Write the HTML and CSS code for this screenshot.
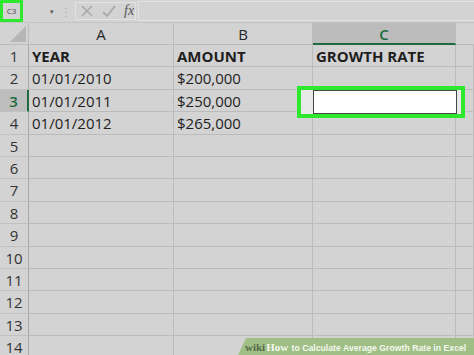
FILE: index.html
```html
<!DOCTYPE html>
<html lang="en">
<head>
    <meta charset="UTF-8">
    <title>Growth Rate</title>
    <link rel="stylesheet" href="styles.css">
</head>
<body>
    <div class="screen">
        <div class="formulaBar">
            <div class="nameBox">
                <span class="cellRef">C3</span>
                <span class="drop">&#9662;</span>
            </div>
            <span class="grip">&#8942;</span>
            <div class="fxBox">
                <svg class="ico" width="14" height="14" viewBox="0 0 14 14"><path d="M2 2 L12 12 M12 2 L2 12" stroke="#a9a9a9" stroke-width="1.6" fill="none"/></svg>
                <svg class="ico" width="16" height="14" viewBox="0 0 16 14"><path d="M2 8 L6 12 L14 2" stroke="#a9a9a9" stroke-width="1.8" fill="none"/></svg>
                <span class="fx">fx</span>
            </div>
            <div class="input"></div>
        </div>

        <div class="sheet">
            <div class="corner"><span class="tri"></span></div>
            <div class="colHead">A</div>
            <div class="colHead">B</div>
            <div class="colHead active">C</div>
            <div class="colHead last"></div>

            <div class="rowHead">1</div>
            <div class="cell bold">YEAR</div>
            <div class="cell bold">AMOUNT</div>
            <div class="cell bold">GROWTH RATE</div>
            <div class="cell"></div>

            <div class="rowHead">2</div>
            <div class="cell">01/01/2010</div>
            <div class="cell">$200,000</div>
            <div class="cell"></div>
            <div class="cell"></div>

            <div class="rowHead active">3</div>
            <div class="cell">01/01/2011</div>
            <div class="cell">$250,000</div>
            <div class="cell"></div>
            <div class="cell"></div>

            <div class="rowHead">4</div>
            <div class="cell">01/01/2012</div>
            <div class="cell">$265,000</div>
            <div class="cell"></div>
            <div class="cell"></div>

            <div class="rowHead">5</div><div class="cell"></div><div class="cell"></div><div class="cell"></div><div class="cell"></div>
            <div class="rowHead">6</div><div class="cell"></div><div class="cell"></div><div class="cell"></div><div class="cell"></div>
            <div class="rowHead">7</div><div class="cell"></div><div class="cell"></div><div class="cell"></div><div class="cell"></div>
            <div class="rowHead">8</div><div class="cell"></div><div class="cell"></div><div class="cell"></div><div class="cell"></div>
            <div class="rowHead">9</div><div class="cell"></div><div class="cell"></div><div class="cell"></div><div class="cell"></div>
            <div class="rowHead">10</div><div class="cell"></div><div class="cell"></div><div class="cell"></div><div class="cell"></div>
            <div class="rowHead">11</div><div class="cell"></div><div class="cell"></div><div class="cell"></div><div class="cell"></div>
            <div class="rowHead">12</div><div class="cell"></div><div class="cell"></div><div class="cell"></div><div class="cell"></div>
            <div class="rowHead">13</div><div class="cell"></div><div class="cell"></div><div class="cell"></div><div class="cell"></div>
            <div class="rowHead">14</div><div class="cell"></div><div class="cell"></div><div class="cell"></div><div class="cell"></div>
        </div>

        <!-- highlight drawn over the selected cell -->
        <div class="highlight"><div class="selected"></div></div>

        <div class="banner"><span class="wiki">wiki</span><span class="how">How</span> to Calculate Average Growth Rate in Excel</div>
    </div>
</body>
</html>
```

FILE: styles.css
```css
body {
    margin: 0;
    background: #d3d3d3;
}
.screen {
    position: relative;
    width: 474px;
    height: 355px;
    overflow: hidden;
    background: #d3d3d3;
    font-family: "Open Sans", "DejaVu Sans", sans-serif;
    color: #1e1e1e;
}

/* formula bar */
.formulaBar {
    display: flex;
    align-items: center;
    height: 22px;
    border-bottom: 1px solid #c4c4c4;
}
.nameBox {
    display: flex;
    align-items: center;
    width: 57px;
    height: 22px;
}
.cellRef {
    box-sizing: border-box;
    width: 23px;
    height: 22px;
    border: 3px solid #2ee82e;
    font-size: 8px;
    line-height: 16px;
    text-align: center;
    color: #444;
}
.drop {
    margin-left: 27px;
    font-size: 7px;
    color: #555;
}
.grip {
    width: 18px;
    text-align: center;
    font-size: 11px;
    color: #aaa;
}
.fxBox {
    box-sizing: border-box;
    display: flex;
    align-items: center;
    gap: 7px;
    width: 61px;
    height: 18px;
    padding-left: 4px;
    border: 1px solid #e2e2e2;
}
.fx {
    font-family: "Liberation Serif", serif;
    font-style: italic;
    font-size: 14px;
    color: #555;
}
.input {
    flex: 1;
    height: 18px;
    margin-left: 2px;
    border: 1px solid #e2e2e2;
    border-right: none;
}

/* grid */
.sheet {
    display: grid;
    grid-template-columns: 29px 145px 139px 143px 1fr;
    grid-template-rows: 22px repeat(14, 22.4px);
}
.corner {
    position: relative;
    border-right: 1px solid #bcbcbc;
    border-bottom: 1px solid #bcbcbc;
}
.tri {
    position: absolute;
    right: 2px;
    bottom: 2px;
    width: 0;
    height: 0;
    border-left: 16px solid transparent;
    border-bottom: 16px solid #b6b6b6;
}
.colHead {
    font-size: 15px;
    line-height: 22px;
    text-align: center;
    color: #262626;
    border-right: 1px solid #bcbcbc;
    border-bottom: 1px solid #bcbcbc;
}
.colHead.active {
    background: #bcbcbc;
    color: #1e6b3e;
    font-weight: 600;
    border-bottom: 2px solid #1e6b3e;
}
.colHead.last {
    border-right: none;
}
.rowHead {
    font-size: 15px;
    line-height: 22px;
    text-align: center;
    color: #333;
    border-right: 1px solid #a8a8a8;
    border-bottom: 1px solid #c0c0c0;
}
.rowHead.active {
    background: #bdbdbd;
    color: #1e6b3e;
    font-weight: 600;
    border-right: 2px solid #1e6b3e;
}
.cell {
    padding-left: 3px;
    font-size: 15px;
    line-height: 22px;
    white-space: nowrap;
    overflow: hidden;
    border-right: 1px solid #bcbcbc;
    border-bottom: 1px solid #bcbcbc;
}
.bold {
    font-weight: 700;
}

/* green annotation box around C3 */
.highlight {
    position: absolute;
    left: 297px;
    top: 86px;
    box-sizing: border-box;
    width: 168px;
    height: 32px;
    padding: 0 4px 0 12px;
    border: 4px solid #2ee82e;
    background: #e9e9e9;
}
.selected {
    box-sizing: border-box;
    height: 100%;
    background: #ffffff;
    border: 1px solid #3f4a42;
}

/* wikiHow banner */
.banner {
    position: absolute;
    right: 0;
    bottom: 0;
    width: 236px;
    height: 17px;
    padding-left: 7px;
    box-sizing: border-box;
    background: #a0bf86;
    clip-path: polygon(8px 0, 100% 0, 100% 100%, 0 100%);
    font-family: "Liberation Sans", Arial, sans-serif;
    font-size: 8.7px;
    font-weight: 700;
    line-height: 18px;
    color: #f4f8ef;
    white-space: nowrap;
}
.wiki {
    font-family: "Liberation Serif", serif;
    font-size: 11px;
    color: #56684a;
}
.how {
    font-family: "Liberation Serif", serif;
    font-size: 11px;
    margin-left: 1px;
    margin-right: 1px;
}
```
